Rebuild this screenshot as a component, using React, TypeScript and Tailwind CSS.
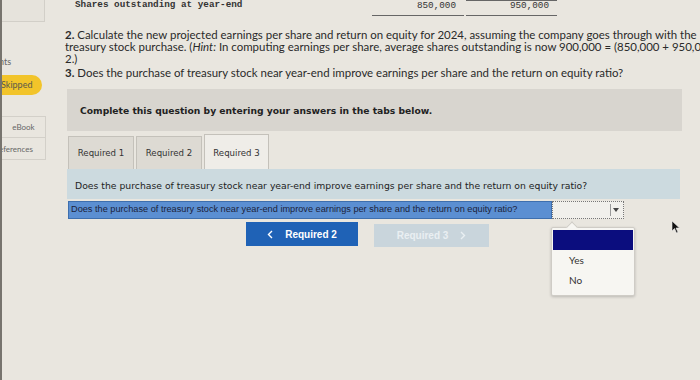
import React from "react";

export default function App() {
  const q = "Does the purchase of treasury stock near year-end improve earnings per share and the return on equity ratio?";
  return (
    <div className="relative flex h-[380px] w-[700px] overflow-hidden bg-[#e9e6df] text-[#222]" style={{ fontFamily: "Lato, 'Open Sans', sans-serif" }}>
      {/* left edge */}
      <div className="w-[2px] shrink-0 bg-[#77746e]" />
      {/* sidebar */}
      <div className="flex w-[44px] shrink-0 flex-col overflow-hidden">
        <div className="h-[22px] w-[43px] border-b border-r border-[#d2cfc8] bg-[#e6e3dc]" />
        <div className="mt-[35px] text-[9px] leading-[10px] text-[#666] -ml-[3px]">nts</div>
        <div className="mt-[8px] flex h-[20px] w-[40px] items-center rounded-r-full bg-[#f2c42a] text-[9px] text-[#5a5a4a]">
          <span className="-ml-[1px]">Skipped</span>
        </div>
        <div className="mt-[21px] flex flex-col border-y border-r border-[#d3d0c9]">
          <div className="flex h-[21px] items-center justify-center border-b border-[#d3d0c9] text-[8px] text-[#666]">eBook</div>
          <div className="flex h-[21px] items-center whitespace-nowrap text-[8px] text-[#666]"><span className="-ml-[3px]">eferences</span></div>
        </div>
      </div>
      {/* main */}
      <div className="flex min-w-0 flex-1 flex-col pl-[19px]">
        {/* header row */}
        <div className="flex h-[16px] items-end whitespace-nowrap text-[9.3px] font-bold text-[#333]" style={{ fontFamily: "'Liberation Mono', monospace" }}>
          <div className="ml-[10px] w-[297px] self-start leading-[9px]">Shares outstanding at year-end</div>
          <div className="flex h-[16px] w-[92px] items-end justify-end border-b border-[#666] pr-[8px] pb-[2px] font-normal">850,000</div>
          <div className="ml-[2px] flex h-[16px] w-[91px] items-end justify-end border-b border-t border-[#666] pr-[8px] pb-[2px] font-normal">950,000</div>
        </div>
        {/* question */}
        <div className="mt-[13px] whitespace-nowrap text-[11.45px] leading-[12px] text-[#2a2a2a]">
          <div><b>2.</b> Calculate the new projected earnings per share and return on equity for 2024, assuming the company goes through with the</div>
          <div>treasury stock purchase. (<i>Hint:</i> In computing earnings per share, average shares outstanding is now 900,000 = (850,000 + 950,000) ÷</div>
          <div>2.)</div>
          <div className="mt-[2px]"><b>3.</b> Does the purchase of treasury stock near year-end improve earnings per share and the return on equity ratio?</div>
        </div>
        {/* instruction box */}
        <div className="mt-[10px] ml-[2px] flex h-[42px] w-[615px] items-center bg-[#d8d5cf] pl-[13px] pt-[2px] text-[9.2px] font-bold text-[#222]" style={{ fontFamily: "'DejaVu Sans', Verdana, sans-serif" }}>
          Complete this question by entering your answers in the tabs below.
        </div>
        {/* tabs */}
        <div className="ml-[3px] mt-[3px] flex items-end gap-[2px] text-[8.6px] text-[#333]" style={{ fontFamily: "'DejaVu Sans', Verdana, sans-serif" }}>
          <div className="flex h-[33px] w-[66px] items-center justify-center border border-b-0 border-[#c4c1ba] bg-[#dddad3]">Required 1</div>
          <div className="flex h-[33px] w-[66px] items-center justify-center border border-b-0 border-[#c4c1ba] bg-[#dddad3]">Required 2</div>
          <div className="flex h-[35px] w-[65px] items-center justify-center border border-b-0 border-[#c4c1ba] bg-[#efede8] pt-[2px]">Required 3</div>
        </div>
        {/* banner */}
        <div className="ml-[2px] flex h-[30px] w-[613px] items-center whitespace-nowrap bg-[#ccdadf] pl-[8px] pt-[4px] text-[9.27px] text-[#222]" style={{ fontFamily: "'DejaVu Sans', Verdana, sans-serif" }}>
          {q}
        </div>
        {/* answer row */}
        <div className="ml-[3px] mt-[2px] flex h-[18px]">
          <div className="flex w-[484px] items-center whitespace-nowrap border border-[#3e6fae] bg-[#5b8fd2] pl-[2px] text-[9.2px] text-[#1b1f3a]" style={{ fontFamily: "'Liberation Sans', Arial, sans-serif" }}>
            {q}
          </div>
          <div className="relative flex w-[72px] items-center justify-end border border-dotted border-[#777] bg-[#f1f0ec] pr-[2px]">
            <div className="flex h-[12px] w-[11px] items-center justify-center border-l border-[#999]">
              <svg width="6" height="4" viewBox="0 0 6 4"><path d="M0 0H6L3 4Z" fill="#444" /></svg>
            </div>
          </div>
        </div>
        {/* buttons */}
        <div className="ml-[181px] mt-[3px] flex items-start gap-[16px]">
          <div className="flex h-[24px] w-[112px] items-center justify-center gap-[12px] bg-[#1f62b6] text-[10px] font-bold text-white" style={{ fontFamily: "'Liberation Sans', Arial, sans-serif" }}>
            <svg width="6" height="9" viewBox="0 0 6 9"><path d="M5 1L1.5 4.5L5 8" fill="none" stroke="#fff" strokeWidth="1.4" /></svg>
            <span>Required 2</span>
          </div>
          <div className="mt-[2px] flex h-[23px] w-[115px] items-center justify-center gap-[12px] bg-[#c9d5dc] text-[10px] font-bold text-[#e9eff2]" style={{ fontFamily: "'Liberation Sans', Arial, sans-serif" }}>
            <span>Required 3</span>
            <svg width="6" height="9" viewBox="0 0 6 9"><path d="M1 1L4.5 4.5L1 8" fill="none" stroke="#e9eff2" strokeWidth="1.4" /></svg>
          </div>
        </div>
      </div>

      {/* dropdown popup */}
      <div className="absolute left-[551px] top-[227px] w-[84px] rounded-[2px] border border-[#cfccc6] bg-[#f7f6f2] pb-[5px] pt-[2px] shadow-[0_1px_3px_rgba(0,0,0,0.2)]">
        <div className="absolute -top-[5px] left-[16px] h-[8px] w-[8px] rotate-45 border-l border-t border-[#cfccc6] bg-[#f7f6f2]" />
        <div className="relative mx-[1px] h-[20px] bg-[#0b0d7e]" />
        <div className="pl-[17px] text-[10px] leading-[20px] text-[#333]">Yes</div>
        <div className="pl-[17px] text-[10px] leading-[20px] text-[#333]">No</div>
      </div>

      {/* cursor */}
      <svg className="absolute left-[671px] top-[220px]" width="10" height="14" viewBox="0 0 10 14">
        <path d="M1 1L1 11L3.5 8.5L5.5 13L7 12.3L5 8L8.5 8Z" fill="#111" stroke="#eee" strokeWidth="0.6" />
      </svg>
    </div>
  );
}
